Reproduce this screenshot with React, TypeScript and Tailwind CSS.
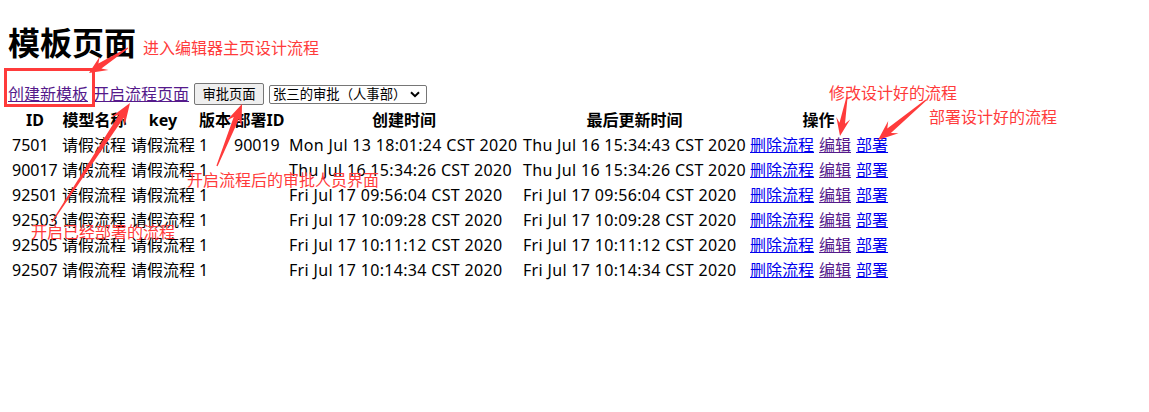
import React from "react";

type Arrow = { x1: number; y1: number; x2: number; y2: number; head: number; hw: number; sw: number };

function arrowPoints(a: Arrow): string {
  const dx = a.x2 - a.x1;
  const dy = a.y2 - a.y1;
  const L = Math.hypot(dx, dy);
  const ux = dx / L;
  const uy = dy / L;
  const nx = -uy;
  const ny = ux;
  const bx = a.x2 - ux * a.head;
  const by = a.y2 - uy * a.head;
  const kx = a.x2 - ux * a.head * 0.72;
  const ky = a.y2 - uy * a.head * 0.72;
  const pts: [number, number][] = [
    [a.x1 + nx * 0.6, a.y1 + ny * 0.6],
    [kx + nx * a.sw, ky + ny * a.sw],
    [bx + nx * a.hw, by + ny * a.hw],
    [a.x2, a.y2],
    [bx - nx * a.hw, by - ny * a.hw],
    [kx - nx * a.sw, ky - ny * a.sw],
    [a.x1 - nx * 0.6, a.y1 - ny * 0.6],
  ];
  return pts.map((p) => `${p[0].toFixed(1)},${p[1].toFixed(1)}`).join(" ");
}

const arrows: Arrow[] = [
  { x1: 128, y1: 48, x2: 89, y2: 73, head: 18, hw: 8, sw: 2.8 },
  { x1: 52, y1: 222, x2: 130, y2: 103, head: 22, hw: 8, sw: 2.8 },
  { x1: 217, y1: 166, x2: 242, y2: 104, head: 21, hw: 8, sw: 2.8 },
  { x1: 847, y1: 97, x2: 840, y2: 136, head: 18, hw: 7, sw: 2.8 },
  { x1: 926, y1: 100, x2: 878, y2: 140, head: 20, hw: 8, sw: 2.8 },
];

const widths = [50, 69, 68, 35, 55, 234, 227, 141];
const headers = ["ID", "模型名称", "key", "版本", "部署ID", "创建时间", "最后更新时间", "操作"];

const rows: string[][] = [
  ["7501", "请假流程", "请假流程", "1", "90019", "Mon Jul 13 18:01:24 CST 2020", "Thu Jul 16 15:34:43 CST 2020"],
  ["90017", "请假流程", "请假流程", "1", "", "Thu Jul 16 15:34:26 CST 2020", "Thu Jul 16 15:34:26 CST 2020"],
  ["92501", "请假流程", "请假流程", "1", "", "Fri Jul 17 09:56:04 CST 2020", "Fri Jul 17 09:56:04 CST 2020"],
  ["92503", "请假流程", "请假流程", "1", "", "Fri Jul 17 10:09:28 CST 2020", "Fri Jul 17 10:09:28 CST 2020"],
  ["92505", "请假流程", "请假流程", "1", "", "Fri Jul 17 10:11:12 CST 2020", "Fri Jul 17 10:11:12 CST 2020"],
  ["92507", "请假流程", "请假流程", "1", "", "Fri Jul 17 10:14:34 CST 2020", "Fri Jul 17 10:14:34 CST 2020"],
];

export default function App() {
  return (
    <div className="relative w-[1149px] h-[412px] overflow-hidden bg-white text-black font-['Noto_Sans','Noto_Sans_CJK_SC',sans-serif]">
      <div className="px-[8px]">
        <h1 className="mt-[24px] h-[37px] text-[32px] leading-[37px] font-bold">模板页面</h1>
        <div className="mt-[22px] flex h-[22px] items-center text-[16px] leading-[20px]">
          <a href="#" className="text-[#551a8b] underline">创建新模板</a>
          <a href="#" className="ml-[5px] text-[#551a8b] underline">开启流程页面</a>
          <button className="ml-[5px] flex h-[22px] w-[70px] items-center justify-center rounded-[2px] border border-[#767676] bg-[#efefef] text-[13.33px] leading-[16px] text-black">
            审批页面
          </button>
          <div className="ml-[5px] flex h-[19px] w-[158px] items-center justify-between rounded-[2px] border border-[#767676] bg-white pl-[3px] pr-[6px] text-[13.33px] leading-[16px]">
            <span>张三的审批（人事部）</span>
            <svg width="10" height="7" viewBox="0 0 10 7">
              <path d="M1 1.2 L5 5.2 L9 1.2" fill="none" stroke="#000" strokeWidth="2" />
            </svg>
          </div>
        </div>
        <div className="ml-[2px] mt-[3px] text-[16px] leading-[21px]">
          <div className="flex h-[25px] items-center font-bold">
            {headers.map((h, i) => (
              <div key={i} style={{ width: widths[i] }} className="shrink-0 px-[2px] text-center whitespace-nowrap">
                {h}
              </div>
            ))}
          </div>
          {rows.map((r, ri) => (
            <div key={ri} className="flex h-[25px] items-center">
              {r.map((c, ci) => (
                <div
                  key={ci}
                  style={{ width: widths[ci] }}
                  className={
                    ci >= 5
                      ? "shrink-0 px-[2px] whitespace-nowrap tracking-[0.32px]"
                      : "shrink-0 px-[2px] whitespace-nowrap"
                  }
                >
                  {c}
                </div>
              ))}
              <div style={{ width: widths[7] }} className="flex shrink-0 gap-[5px] px-[2px] whitespace-nowrap">
                <a href="#" className="text-[#0000ee] underline">删除流程</a>
                <a href="#" className="text-[#551a8b] underline">编辑</a>
                <a href="#" className="text-[#0000ee] underline">部署</a>
              </div>
            </div>
          ))}
        </div>
      </div>

      {/* annotation overlay */}
      <div className="pointer-events-none absolute left-[4px] top-[68px] h-[39px] w-[91px] border-[3px] border-[#ff3b3b]" />
      <svg className="pointer-events-none absolute inset-0" width="1149" height="412">
        {arrows.map((a, i) => (
          <polygon key={i} points={arrowPoints(a)} fill="#ff3b3b" />
        ))}
      </svg>
      <div className="pointer-events-none absolute left-[143px] top-[37px] text-[16px] leading-[20px] text-[#ff3b3b] font-['Noto_Sans_CJK_SC',sans-serif] whitespace-nowrap">
        进入编辑器主页设计流程
      </div>
      <div className="pointer-events-none absolute left-[187px] top-[169px] text-[16px] leading-[20px] text-[#ff3b3b] font-['Noto_Sans_CJK_SC',sans-serif] whitespace-nowrap">
        开启流程后的审批人员界面
      </div>
      <div className="pointer-events-none absolute left-[31px] top-[221px] text-[16px] leading-[20px] text-[#ff3b3b] font-['Noto_Sans_CJK_SC',sans-serif] whitespace-nowrap">
        开启已经部署的流程
      </div>
      <div className="pointer-events-none absolute left-[829px] top-[82px] text-[16px] leading-[20px] text-[#ff3b3b] font-['Noto_Sans_CJK_SC',sans-serif] whitespace-nowrap">
        修改设计好的流程
      </div>
      <div className="pointer-events-none absolute left-[929px] top-[106px] text-[16px] leading-[20px] text-[#ff3b3b] font-['Noto_Sans_CJK_SC',sans-serif] whitespace-nowrap">
        部署设计好的流程
      </div>
    </div>
  );
}
